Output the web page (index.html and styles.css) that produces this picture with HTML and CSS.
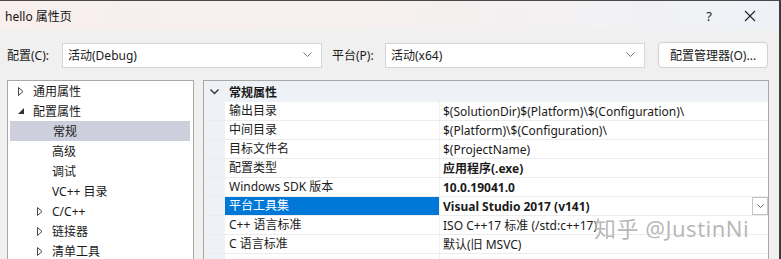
FILE: index.html
```html
<!DOCTYPE html>
<html lang="zh-CN">
  <head>
    <meta charset="UTF-8" />
    <title>hello 属性页</title>
    <link rel="stylesheet" href="styles.css">
  </head>
  <body>
    <div class="janela">
      <div class="titulo">
        <span class="titulo-texto">hello 属性页</span>
        <div class="botoes-titulo">
          <span class="ajuda">?</span>
          <svg class="fechar" width="12" height="12" viewBox="0 0 12 12"><path d="M1 1L11 11M11 1L1 11" stroke="#222" stroke-width="1.1" fill="none"/></svg>
        </div>
      </div>

      <div class="barra">
        <span class="rotulo">配置(C):</span>
        <div class="combo">
          <span>活动(Debug)</span>
          <svg width="9" height="6" viewBox="0 0 9 6"><path d="M0.5 0.5L4.5 4.5L8.5 0.5" stroke="#777" fill="none"/></svg>
        </div>
        <span class="rotulo plataforma">平台(P):</span>
        <div class="combo">
          <span>活动(x64)</span>
          <svg width="9" height="6" viewBox="0 0 9 6"><path d="M0.5 0.5L4.5 4.5L8.5 0.5" stroke="#777" fill="none"/></svg>
        </div>
        <button class="gerenciador">配置管理器(O)...</button>
      </div>

      <div class="paineis">
        <div class="arvore"></div>
        <div class="grade"></div>
      </div>

      <div class="marca">知乎 @JustinNi</div>
    </div>

    <script>
      // itens da arvore
      const itensArvore = [
        { nome: "通用属性", nivel: 0, seta: "fechada" },
        { nome: "配置属性", nivel: 0, seta: "aberta" },
        { nome: "常规", nivel: 1, ativo: true },
        { nome: "高级", nivel: 1 },
        { nome: "调试", nivel: 1 },
        { nome: "VC++ 目录", nivel: 1 },
        { nome: "C/C++", nivel: 1, seta: "fechada" },
        { nome: "链接器", nivel: 1, seta: "fechada" },
        { nome: "清单工具", nivel: 1, seta: "fechada" },
      ];

      const propriedades = [
        { nome: "输出目录", valor: "$(SolutionDir)$(Platform)\\$(Configuration)\\" },
        { nome: "中间目录", valor: "$(Platform)\\$(Configuration)\\" },
        { nome: "目标文件名", valor: "$(ProjectName)" },
        { nome: "配置类型", valor: "应用程序(.exe)", negrito: true },
        { nome: "Windows SDK 版本", valor: "10.0.19041.0", negrito: true },
        { nome: "平台工具集", valor: "Visual Studio 2017 (v141)", negrito: true, ativo: true },
        { nome: "C++ 语言标准", valor: "ISO C++17 标准 (/std:c++17)" },
        { nome: "C 语言标准", valor: "默认(旧 MSVC)" },
        { nome: "", valor: "" },
      ];

      const setaFechada = `<svg width="6" height="9" viewBox="0 0 6 9"><path d="M0.5 0.5L5 4.5L0.5 8.5Z" stroke="#444" fill="none"/></svg>`;
      const setaAberta = `<svg width="6" height="6" viewBox="0 0 6 6"><path d="M6 0L6 6L0 6Z" fill="#333"/></svg>`;

      let templateArvore = "";
      itensArvore.map((item) => {
        let seta = "";
        if (item.seta === "fechada") seta = setaFechada;
        if (item.seta === "aberta") seta = setaAberta;
        templateArvore += `<div class="no nivel-${item.nivel}${item.ativo ? " ativo" : ""}">
            <span class="seta">${seta}</span>
            <span>${item.nome}</span>
          </div>`;
      });
      document.querySelector(".arvore").innerHTML = templateArvore;

      let templateGrade = `<div class="categoria">
          <span class="margem"><svg width="9" height="6" viewBox="0 0 9 6"><path d="M0.5 0.5L4.5 4.5L8.5 0.5" stroke="#333" stroke-width="1.3" fill="none"/></svg></span>
          <span class="categoria-nome">常规属性</span>
        </div>`;
      propriedades.map((prop) => {
        templateGrade += `<div class="linha${prop.ativo ? " ativo" : ""}">
            <span class="margem"></span>
            <span class="nome">${prop.nome}</span>
            <span class="valor${prop.negrito ? " negrito" : ""}">${prop.valor}</span>
            ${prop.ativo ? `<span class="botao-lista"><svg width="7" height="4" viewBox="0 0 7 4"><path d="M0.5 0.5L3.5 3.5L6.5 0.5" stroke="#666" fill="none"/></svg></span>` : ""}
          </div>`;
      });
      document.querySelector(".grade").innerHTML = templateGrade;
    </script>
  </body>
</html>
```

FILE: styles.css
```css
* {
  margin: 0;
  padding: 0;
  box-sizing: border-box;
}

body {
  width: 781px;
  height: 259px;
  overflow: hidden;
  background: #ffffff;
  font-family: "Noto Sans", "Noto Sans CJK SC", sans-serif;
  font-size: 12px;
  color: #1a1a1a;
}

.janela {
  position: relative;
  width: 781px;
  height: 259px;
  background: #f0f0f0;
  border-top: 1px solid #4a4a4a;
  border-right: 2px solid #3c3c3c;
  overflow: hidden;
}

.titulo {
  display: flex;
  justify-content: space-between;
  align-items: center;
  height: 29px;
  padding-left: 5px;
  background: linear-gradient(to right, #f8efee, #f5f0f0 60%, #eef2f7);
}

.titulo-texto {
  font-size: 12px;
  color: #111;
}

.botoes-titulo {
  display: flex;
  align-items: center;
  column-gap: 32px;
  padding-right: 23px;
}

.ajuda {
  font-size: 13px;
  font-family: "Noto Sans", sans-serif;
}

.barra {
  display: flex;
  align-items: center;
  height: 50px;
  padding-left: 7px;
}

.rotulo {
  width: 55px;
}

.plataforma {
  width: 53px;
  margin-left: 10px;
}

.combo {
  display: flex;
  justify-content: space-between;
  align-items: center;
  width: 260px;
  height: 25px;
  padding: 0 9px 0 5px;
  background: #ffffff;
  border: 1px solid #d5d5d5;
}

.gerenciador {
  all: unset;
  margin-left: 13px;
  width: 110px;
  height: 26px;
  text-align: center;
  background: #fdfdfd;
  border: 1px solid #d0d0d0;
  border-radius: 4px;
  font-size: 12px;
  box-sizing: border-box;
}

.paineis {
  display: flex;
  column-gap: 9px;
  padding-left: 7px;
}

.arvore {
  width: 187px;
  height: 200px;
  padding: 0 3px 0 1px;
  background: #ffffff;
  border: 1px solid #a8a8a8;
}

.no {
  display: flex;
  align-items: center;
  height: 20px;
}

.no .seta {
  display: flex;
  justify-content: center;
  width: 24px;
}

.nivel-0 {
  padding-left: 0;
}

.nivel-1 {
  padding-left: 19px;
}

.no.ativo {
  background: #cdd0dc;
  margin-left: 1px;
}

.grade {
  width: 566px;
  height: 200px;
  background: #ffffff;
  border: 1px solid #a8a8a8;
}

.categoria {
  display: flex;
  align-items: center;
  height: 21px;
  background: #eef1f5;
}

.categoria-nome {
  font-weight: bold;
  padding-left: 4px;
}

.margem {
  display: flex;
  justify-content: center;
  align-items: center;
  width: 21px;
  height: 100%;
  background: #eef1f5;
}

.linha {
  position: relative;
  display: flex;
  align-items: center;
  height: 19px;
  border-bottom: 1px solid #ececec;
}

.linha .nome {
  width: 215px;
  height: 100%;
  padding-left: 4px;
  line-height: 18px;
  border-right: 1px solid #f0f0f0;
}

.linha .valor {
  padding-left: 3px;
}

.negrito {
  font-weight: bold;
}

.linha.ativo .nome {
  background: #0078d7;
  color: #ffffff;
}

.botao-lista {
  position: absolute;
  right: 0;
  top: 0;
  display: flex;
  justify-content: center;
  align-items: center;
  width: 16px;
  height: 18px;
  background: #ffffff;
  border: 1px solid #c4c4c4;
}

.marca {
  position: absolute;
  left: 594px;
  top: 210px;
  font-family: "Noto Sans", "Noto Sans CJK SC", sans-serif;
  font-size: 22px;
  color: rgba(160, 160, 160, 0.75);
  text-shadow: 0 0 2px #ffffff;
  letter-spacing: 0.5px;
}
```
